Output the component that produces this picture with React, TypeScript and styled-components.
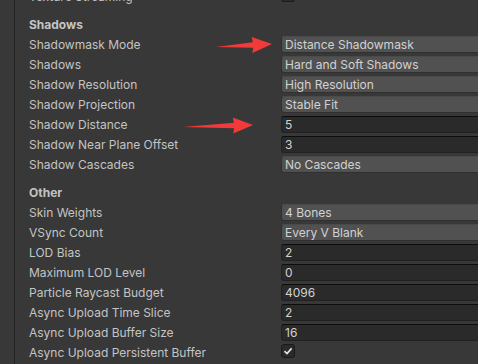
import React from "react";
import styled, { createGlobalStyle } from "styled-components";

const Global = createGlobalStyle`
  html, body { margin: 0; padding: 0; background: #383838; overflow: hidden; }
  body { font-family: Inter, "Noto Sans", "DejaVu Sans", sans-serif; }
`;

const Page = styled.div`
  position: relative;
  width: 478px;
  height: 364px;
  overflow: hidden;
  background: #383838;
`;

const Rail = styled.div`
  display: flex;
  height: 100%;
`;

const Gutter = styled.div`
  width: 14px;
  flex: none;
  border-right: 1px solid #232323;
`;

const List = styled.div`
  flex: 1;
  display: flex;
  flex-direction: column;
  margin-top: -13px;
  padding-left: 14px;
`;

const Row = styled.div`
  display: grid;
  grid-template-columns: 252px 1fr;
  align-items: center;
  height: 20px;
  flex: none;
`;

const Label = styled.div`
  font-size: 12px;
  color: #c4c4c4;
  white-space: nowrap;
  line-height: 20px;
`;

const Header = styled.div`
  height: 20px;
  line-height: 20px;
  margin-top: 8px;
  font-size: 12px;
  font-weight: 700;
  color: #c4c4c4;
  flex: none;
`;

const Field = styled.div<{ $kind: "drop" | "num" }>`
  height: 17px;
  margin-top: 1px;
  align-self: start;
  box-sizing: border-box;
  margin-right: -20px;
  border-radius: 3px;
  padding-left: 3px;
  font-size: 12px;
  line-height: 15px;
  color: #d2d2d2;
  white-space: nowrap;
  background: ${(p) => (p.$kind === "drop" ? "#515151" : "#2a2a2a")};
  border: 1px solid ${(p) => (p.$kind === "drop" ? "#303030" : "#212121")};
  border-top-color: ${(p) => (p.$kind === "drop" ? "#4a4a4a" : "#0d0d0d")};
`;

const Check = styled.div<{ $on?: boolean }>`
  width: 14px;
  height: 14px;
  box-sizing: border-box;
  border-radius: 3px;
  background: #2a2a2a;
  border: 1px solid #1a1a1a;
  display: flex;
  align-items: center;
  justify-content: center;
  margin-top: 1px;
  align-self: start;
`;

const Arrow = styled.svg`
  position: absolute;
  overflow: visible;
`;

type Item =
  | { t: "drop" | "num"; label: string; value: string }
  | { t: "check"; label: string; on: boolean }
  | { t: "header"; label: string };

const items: Item[] = [
  { t: "check", label: "Texture Streaming", on: false },
  { t: "header", label: "Shadows" },
  { t: "drop", label: "Shadowmask Mode", value: "Distance Shadowmask" },
  { t: "drop", label: "Shadows", value: "Hard and Soft Shadows" },
  { t: "drop", label: "Shadow Resolution", value: "High Resolution" },
  { t: "drop", label: "Shadow Projection", value: "Stable Fit" },
  { t: "num", label: "Shadow Distance", value: "5" },
  { t: "num", label: "Shadow Near Plane Offset", value: "3" },
  { t: "drop", label: "Shadow Cascades", value: "No Cascades" },
  { t: "header", label: "Other" },
  { t: "drop", label: "Skin Weights", value: "4 Bones" },
  { t: "drop", label: "VSync Count", value: "Every V Blank" },
  { t: "num", label: "LOD Bias", value: "2" },
  { t: "num", label: "Maximum LOD Level", value: "0" },
  { t: "num", label: "Particle Raycast Budget", value: "4096" },
  { t: "num", label: "Async Upload Time Slice", value: "2" },
  { t: "num", label: "Async Upload Buffer Size", value: "16" },
  { t: "check", label: "Async Upload Persistent Buffer", on: true },
];

const RedArrow: React.FC<{ x1: number; y1: number; x2: number; y2: number }> = ({ x1, y1, x2, y2 }) => {
  const dx = x2 - x1;
  const dy = y2 - y1;
  const len = Math.hypot(dx, dy);
  const ang = (Math.atan2(dy, dx) * 180) / Math.PI;
  const head = 19;
  const s = len - head;
  return (
    <Arrow
      width={len}
      height={16}
      style={{
        left: x1,
        top: y1 - 8,
        transform: `rotate(${ang}deg)`,
        transformOrigin: "0 8px",
      }}
    >
      <path
        d={`M0 8 L${s} 5.2 L${s - 1} 0 L${len} 8 L${s - 1} 16 L${s} 10.8 Z`}
        fill="#f23a3a"
      />
    </Arrow>
  );
};

export default function App() {
  return (
    <Page>
      <Global />
      <Rail>
        <Gutter />
        <List>
          {items.map((it, i) => {
            if (it.t === "header") return <Header key={i}>{it.label}</Header>;
            return (
              <Row key={i}>
                <Label>{it.label}</Label>
                {it.t === "check" ? (
                  <Check $on={it.on}>
                    {it.on && (
                      <svg width="10" height="10" viewBox="0 0 10 10">
                        <path d="M1.5 5.2 L4 7.6 L8.6 2.4" fill="none" stroke="#e6e6e6" strokeWidth="1.6" />
                      </svg>
                    )}
                  </Check>
                ) : (
                  <Field $kind={it.t}>{it.value}</Field>
                )}
              </Row>
            );
          })}
        </List>
      </Rail>
      <RedArrow x1={216} y1={47} x2={272} y2={44} />
      <RedArrow x1={183} y1={127} x2={253} y2={125} />
    </Page>
  );
}
